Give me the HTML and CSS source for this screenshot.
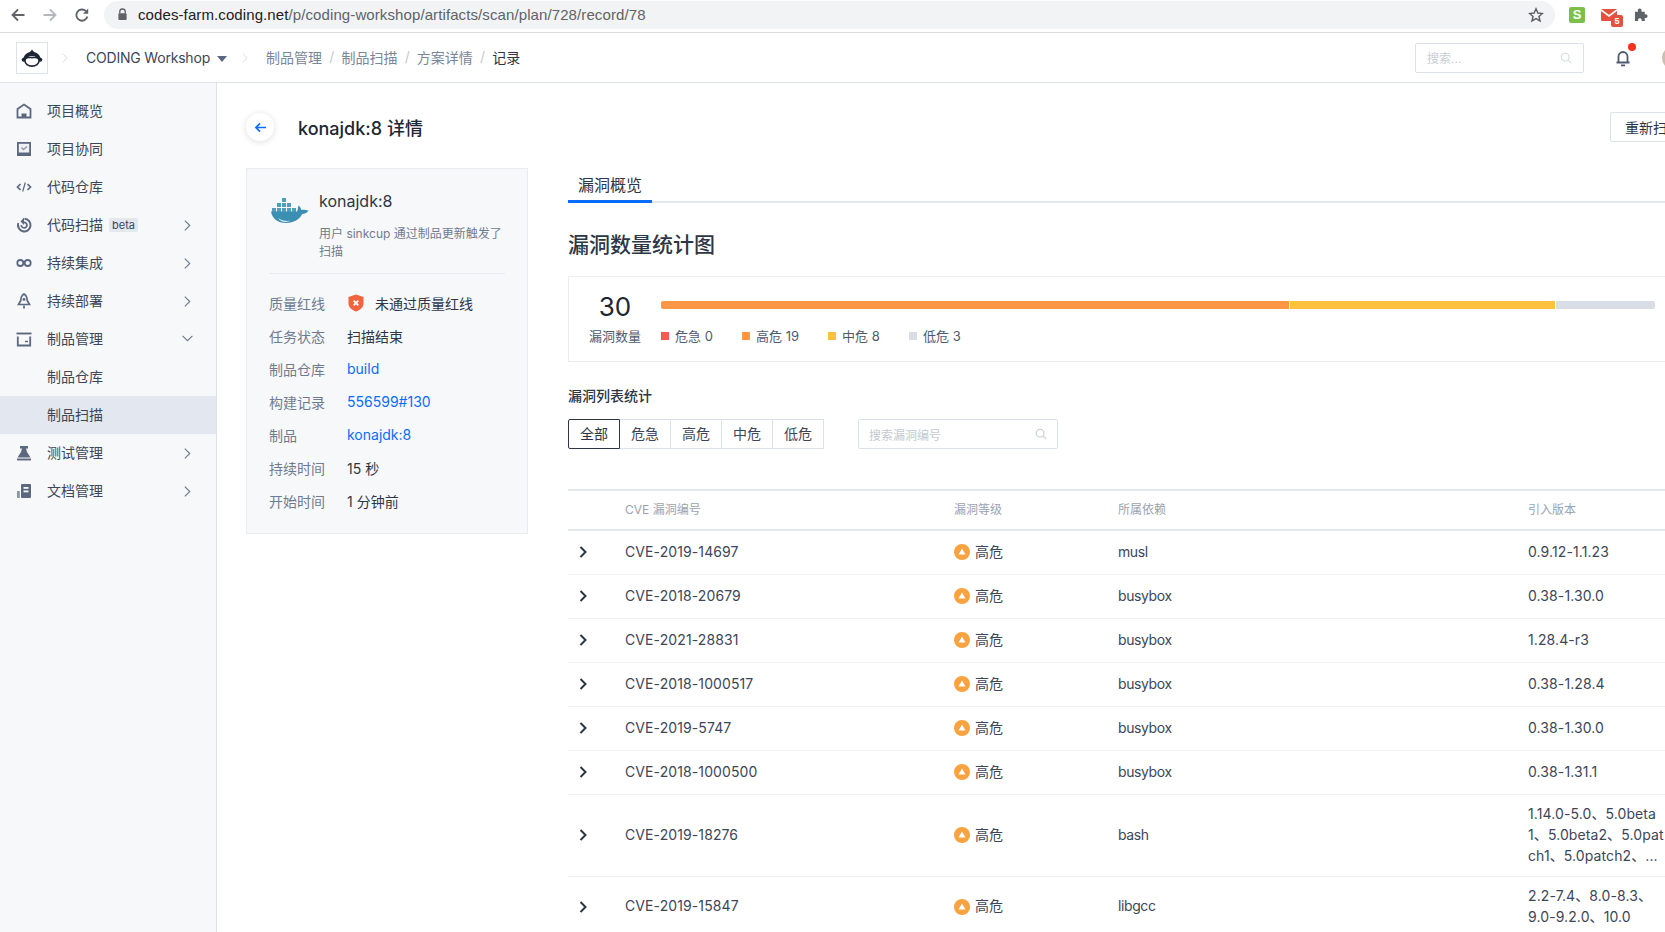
FILE: index.html
```html
<!DOCTYPE html>
<html lang="zh-CN">
<head>
    <meta charset="UTF-8">
    <title>konajdk:8 详情</title>
    <link rel="stylesheet" href="styles.css">
</head>
<body>

    <!-- Browser toolbar -->
    <div class="chrome">
        <svg class="chrome-btn" viewBox="0 0 16 16"><path d="M14.500 8H2.500M8 2.500 2.500 8 8 13.500" fill="none" stroke="#5f6368" stroke-width="1.800"/></svg>
        <svg class="chrome-btn" viewBox="0 0 16 16"><path d="M1.500 8h12M8 2.500 13.500 8 8 13.500" fill="none" stroke="#b4b7bb" stroke-width="1.800"/></svg>
        <svg class="chrome-btn" viewBox="0 0 16 16"><path d="M13.400 9.500A5.600 5.600 0 1 1 12 4.200" fill="none" stroke="#5f6368" stroke-width="1.800"/><path d="M14.200 1.600v5.200H9z" fill="#5f6368"/></svg>
        <div class="omnibox">
            <svg class="lock" viewBox="0 0 12 14"><path d="M3 6V4a3 3 0 0 1 6 0v2" fill="none" stroke="#5f6368" stroke-width="1.400"/><rect x="1.500" y="5.500" width="9" height="7.500" rx="1" fill="#5f6368"/></svg>
            <span class="url"><b>codes-farm.coding.net</b>/p/coding-workshop/artifacts/scan/plan/728/record/78</span>
            <svg class="star" viewBox="0 0 16 16"><path d="M8 1.800 9.900 6l4.500.5-3.400 3 1 4.500L8 11.700 4 14l1-4.500-3.400-3L6.100 6z" fill="none" stroke="#5f6368" stroke-width="1.500"/></svg>
        </div>
        <div class="ext-s">S</div>
        <div class="ext-mail">
            <svg viewBox="0 0 16 12"><rect width="16" height="12" rx="1" fill="#e25241"/><path d="M0 1 8 7l8-6" fill="none" stroke="#fff" stroke-width="1.600"/></svg>
            <span class="ext-badge">5</span>
        </div>
        <svg class="ext-puzzle" viewBox="0 0 16 16"><path d="M1 5h3.500a2 2 0 1 1 3.500-1.500V5h3.500v3a2 2 0 1 1 0 3.500V15H8a2 2 0 1 0-3.500 0H1z" fill="#5f6368"/></svg>
        <div class="ext-last"></div>
    </div>

    <!-- App header -->
    <header class="topbar">
        <div class="logo">
            <svg viewBox="0 0 24 20"><path d="M12 .5 14.500 4h-5z" fill="#1e2633"/><circle cx="2.800" cy="12" r="2.300" fill="#1e2633"/><circle cx="21.200" cy="12" r="2.300" fill="#1e2633"/><path d="M2.500 10C4 5.500 7.500 3 12 3s8 2.500 9.500 7z" fill="#1e2633"/><ellipse cx="12" cy="13" rx="7.800" ry="6" fill="#fff" stroke="#1e2633" stroke-width="1.800"/><path d="M5 11.500c3-2 4.500-1 7-1s4-1 7 1v-3H5z" fill="#1e2633"/></svg>
        </div>
        <svg class="sep first-sep" viewBox="0 0 8 14"><path d="m1 1 6 6-6 6" fill="none" stroke="#c9ced6" stroke-width="1"/></svg>
        <span class="project">CODING Workshop</span>
        <span class="caret"></span>
        <svg class="sep" viewBox="0 0 8 14"><path d="m1 1 6 6-6 6" fill="none" stroke="#c9ced6" stroke-width="1"/></svg>
        <nav class="crumbs">
            <span>制品管理</span><i>/</i><span>制品扫描</span><i>/</i><span>方案详情</span><i>/</i><span class="current">记录</span>
        </nav>
        <div class="top-search">
            <span>搜索...</span>
            <svg class="search-icon" viewBox="0 0 14 14"><circle cx="6" cy="6" r="4.500" fill="none" stroke="#d3d7de" stroke-width="1.200"/><path d="m9.500 9.500 3.500 3.500" stroke="#d3d7de" stroke-width="1.200"/></svg>
        </div>
        <div class="bell">
            <svg viewBox="0 0 16 18"><path d="M1.500 13.500h13M3.500 13V7.500a4.500 4.500 0 0 1 9 0V13" fill="none" stroke="#4e5a70" stroke-width="1.800"/><path d="M6 15.500h4v1.800H6z" fill="#4e5a70"/></svg>
            <span class="bell-dot"></span>
        </div>
        <div class="avatar"></div>
    </header>

    <div class="layout">
        <aside class="sidebar">
            <div class="nav-item">
                <svg class="nav-icon" viewBox="0 0 16 16"><path d="M1.500 14.500V6L8 1.500 14.500 6v8.500z" fill="none" stroke="#5c6880" stroke-width="1.800"/><rect x="5.500" y="10.500" width="5" height="4" fill="#5c6880"/></svg>
                <span>项目概览</span>
            </div>
            <div class="nav-item">
                <svg class="nav-icon" viewBox="0 0 16 16"><rect x="1" y="1" width="14" height="14" fill="#5c6880"/><rect x="2.800" y="2.800" width="10.400" height="8.700" fill="#eef0f4"/><path d="m5.500 6.500 2 2 3.500-3" fill="none" stroke="#8d97a8" stroke-width="1.300"/></svg>
                <span>项目协同</span>
            </div>
            <div class="nav-item">
                <svg class="nav-icon" viewBox="0 0 16 16"><path d="M4.500 5 1.500 8l3 3M11.500 5l3 3-3 3" fill="none" stroke="#5c6880" stroke-width="1.700"/><path d="m9.300 3.500-2.600 9" stroke="#5c6880" stroke-width="1.200"/></svg>
                <span>代码仓库</span>
            </div>
            <div class="nav-item">
                <svg class="nav-icon" viewBox="0 0 16 16"><path d="M8.500 1.800A6.300 6.300 0 1 1 2.300 6" fill="none" stroke="#5c6880" stroke-width="2"/><path d="M8 5.300A2.800 2.800 0 1 1 5.300 8" fill="none" stroke="#5c6880" stroke-width="1.700"/><path d="M8 .5v7.500l-3.500-3.500z" fill="#5c6880"/></svg>
                <span>代码扫描</span>
                <span class="beta">beta</span>
                <svg class="nav-arrow" viewBox="0 0 10 14"><path d="m2 1.500 5.500 5.500L2 12.500" fill="none" stroke="#6f7b90" stroke-width="1.300"/></svg>
            </div>
            <div class="nav-item">
                <svg class="nav-icon" viewBox="0 0 16 16"><circle cx="4.300" cy="8" r="3" fill="none" stroke="#5c6880" stroke-width="1.800"/><circle cx="11.700" cy="8" r="3" fill="none" stroke="#5c6880" stroke-width="1.800"/></svg>
                <span>持续集成</span>
                <svg class="nav-arrow" viewBox="0 0 10 14"><path d="m2 1.500 5.500 5.500L2 12.500" fill="none" stroke="#6f7b90" stroke-width="1.300"/></svg>
            </div>
            <div class="nav-item">
                <svg class="nav-icon" viewBox="0 0 16 16"><path d="M8 1c-2.500 1.500-3.200 4-3.200 6.500L2.500 11.500h11l-2.300-4C11.200 5 10.500 2.500 8 1z" fill="none" stroke="#5c6880" stroke-width="1.700"/><circle cx="8" cy="6.500" r="1.400" fill="#5c6880"/><path d="M8 12.500V15.500" stroke="#5c6880" stroke-width="1.700"/></svg>
                <span>持续部署</span>
                <svg class="nav-arrow" viewBox="0 0 10 14"><path d="m2 1.500 5.500 5.500L2 12.500" fill="none" stroke="#6f7b90" stroke-width="1.300"/></svg>
            </div>
            <div class="nav-item">
                <svg class="nav-icon" viewBox="0 0 16 16"><path d="M.5 2.500h15" stroke="#5c6880" stroke-width="1.900"/><path d="M1.800 5.500v9h12.400v-9" fill="none" stroke="#5c6880" stroke-width="1.800"/><path d="M9 10.500h3" stroke="#5c6880" stroke-width="1.500"/></svg>
                <span>制品管理</span>
                <svg class="nav-arrow down" viewBox="0 0 14 10"><path d="m1.500 2 5.500 5.500L12.500 2" fill="none" stroke="#6f7b90" stroke-width="1.300"/></svg>
            </div>
            <div class="nav-item sub">
                <span>制品仓库</span>
            </div>
            <div class="nav-item sub active">
                <span>制品扫描</span>
            </div>
            <div class="nav-item">
                <svg class="nav-icon" viewBox="0 0 16 16"><path d="M4 1h8v2.500H10L11 7H5l1-3.500H4z" fill="#5c6880"/><path d="M5 7h6l3.500 5.500H1.500z" fill="#5c6880"/><path d="M1 14.500h14" stroke="#5c6880" stroke-width="1.900"/></svg>
                <span>测试管理</span>
                <svg class="nav-arrow" viewBox="0 0 10 14"><path d="m2 1.500 5.500 5.500L2 12.500" fill="none" stroke="#6f7b90" stroke-width="1.300"/></svg>
            </div>
            <div class="nav-item">
                <svg class="nav-icon" viewBox="0 0 16 16"><rect x="5" y="1" width="10" height="14" rx="1" fill="#5c6880"/><rect x="7.500" y="4" width="5" height="1.800" fill="#f7f8fa"/><rect x="7.500" y="7.500" width="5" height="1.800" fill="#f7f8fa"/><rect x="1" y="8" width="2.800" height="7" fill="#8d97a8"/></svg>
                <span>文档管理</span>
                <svg class="nav-arrow" viewBox="0 0 10 14"><path d="m2 1.500 5.500 5.500L2 12.500" fill="none" stroke="#6f7b90" stroke-width="1.300"/></svg>
            </div>
        </aside>

        <main class="main">
            <div class="page-head">
                <div class="back">
                    <svg viewBox="0 0 14 12"><path d="M13 6H2M6.500 1.500 2 6l4.500 4.500" fill="none" stroke="#0a6cff" stroke-width="1.800"/></svg>
                </div>
                <h1>konajdk:8 详情</h1>
                <button class="rescan">重新扫描</button>
            </div>

            <div class="columns">
                <section class="card">
                    <div class="card-top">
                        <svg class="whale" viewBox="0 0 38 26">
                            <g fill="#4f9fbc"><rect x="11" y="0" width="4" height="4"/><rect x="11" y="5" width="4" height="4"/><rect x="16" y="5" width="4" height="4"/><rect x="6" y="5" width="4" height="4"/><rect x="1" y="10" width="4" height="4"/><rect x="6" y="10" width="4" height="4"/><rect x="11" y="10" width="4" height="4"/><rect x="16" y="10" width="4" height="4"/><rect x="21" y="10" width="4" height="4"/></g>
                            <path d="M0 13.500h26c1.200-1.500.6-4 1.500-6 1.600 1 2.500 3 2.800 4.600 2-.5 5-.3 7.200.7-1.500 2.300-4.300 3-6.300 3.200C28.500 21.500 23 25 15 25 7 25 1 20.500 0 13.500z" fill="#3a8fb3"/>
                            <path d="M7 20c3 2.500 8 3.300 12 2.800-2.800 1.800-9.500 1.700-12-2.800z" fill="#e3eef3"/>
                        </svg>
                        <div class="card-title">
                            <h2>konajdk:8</h2>
                            <p>用户 sinkcup 通过制品更新触发了扫描</p>
                        </div>
                    </div>
                    <dl class="info">
                        <div class="info-row"><dt>质量红线</dt><dd class="gate">
                            <svg class="shield" viewBox="0 0 16 18"><path d="M8 .5 15.500 3v6.500c0 4-3.500 6.500-7.500 8-4-1.500-7.500-4-7.500-8V3z" fill="#f2643d"/><path d="m5.700 6.700 4.600 4.600m0-4.600-4.600 4.600" stroke="#fff" stroke-width="1.800"/></svg>未通过质量红线</dd></div>
                        <div class="info-row"><dt>任务状态</dt><dd>扫描结束</dd></div>
                        <div class="info-row"><dt>制品仓库</dt><dd><a>build</a></dd></div>
                        <div class="info-row"><dt>构建记录</dt><dd><a>556599#130</a></dd></div>
                        <div class="info-row"><dt>制品</dt><dd><a>konajdk:8</a></dd></div>
                        <div class="info-row"><dt>持续时间</dt><dd>15 秒</dd></div>
                        <div class="info-row"><dt>开始时间</dt><dd>1 分钟前</dd></div>
                    </dl>
                </section>

                <section class="detail">
                    <div class="tabs"><span class="tab">漏洞概览</span></div>
                    <h3 class="chart-title">漏洞数量统计图</h3>

                    <div class="stats">
                        <div class="total">
                            <strong>30</strong>
                            <span>漏洞数量</span>
                        </div>
                        <div class="stats-right">
                            <div class="bar">
                                <span class="seg high"></span>
                                <span class="seg mid"></span>
                                <span class="seg low"></span>
                            </div>
                            <div class="legend">
                                <span class="legend-item w-crit"><i class="sq crit"></i>危急 0</span>
                                <span class="legend-item w-high"><i class="sq orange"></i>高危 19</span>
                                <span class="legend-item w-mid"><i class="sq yellow"></i>中危 8</span>
                                <span class="legend-item"><i class="sq grey"></i>低危 3</span>
                            </div>
                        </div>
                    </div>

                    <h4 class="list-title">漏洞列表统计</h4>
                    <div class="filters">
                        <div class="btn-group">
                            <span class="on">全部</span><span>危急</span><span>高危</span><span>中危</span><span>低危</span>
                        </div>
                        <div class="cve-search">
                            <span>搜索漏洞编号</span>
                            <svg class="search-icon" viewBox="0 0 14 14"><circle cx="6" cy="6" r="4.500" fill="none" stroke="#c9ced7" stroke-width="1.400"/><path d="m9.500 9.500 3.500 3.500" stroke="#c9ced7" stroke-width="1.400"/></svg>
                        </div>
                    </div>

                    <table class="cve-table">
                        <colgroup><col class="c-exp"><col class="c-cve"><col class="c-lvl"><col class="c-dep"><col class="c-ver"></colgroup>
                        <thead>
                            <tr><th></th><th>CVE 漏洞编号</th><th>漏洞等级</th><th>所属依赖</th><th>引入版本</th></tr>
                        </thead>
                        <tbody>
                            <tr><td class="exp"><svg viewBox="0 0 8 12"><path d="m1.500 1 5 5-5 5" fill="none" stroke="#2c3646" stroke-width="2"/></svg></td><td>CVE-2019-14697</td><td><span class="lvl"><svg viewBox="0 0 16 16"><circle cx="8" cy="8" r="8" fill="#f8a33f"/><path d="M8 4.500 11.500 10.500h-7z" fill="#fff"/></svg>高危</span></td><td class="dep">musl</td><td>0.9.12-1.1.23</td></tr>
                            <tr><td class="exp"><svg viewBox="0 0 8 12"><path d="m1.500 1 5 5-5 5" fill="none" stroke="#2c3646" stroke-width="2"/></svg></td><td>CVE-2018-20679</td><td><span class="lvl"><svg viewBox="0 0 16 16"><circle cx="8" cy="8" r="8" fill="#f8a33f"/><path d="M8 4.500 11.500 10.500h-7z" fill="#fff"/></svg>高危</span></td><td class="dep">busybox</td><td>0.38-1.30.0</td></tr>
                            <tr><td class="exp"><svg viewBox="0 0 8 12"><path d="m1.500 1 5 5-5 5" fill="none" stroke="#2c3646" stroke-width="2"/></svg></td><td>CVE-2021-28831</td><td><span class="lvl"><svg viewBox="0 0 16 16"><circle cx="8" cy="8" r="8" fill="#f8a33f"/><path d="M8 4.500 11.500 10.500h-7z" fill="#fff"/></svg>高危</span></td><td class="dep">busybox</td><td>1.28.4-r3</td></tr>
                            <tr><td class="exp"><svg viewBox="0 0 8 12"><path d="m1.500 1 5 5-5 5" fill="none" stroke="#2c3646" stroke-width="2"/></svg></td><td>CVE-2018-1000517</td><td><span class="lvl"><svg viewBox="0 0 16 16"><circle cx="8" cy="8" r="8" fill="#f8a33f"/><path d="M8 4.500 11.500 10.500h-7z" fill="#fff"/></svg>高危</span></td><td class="dep">busybox</td><td>0.38-1.28.4</td></tr>
                            <tr><td class="exp"><svg viewBox="0 0 8 12"><path d="m1.500 1 5 5-5 5" fill="none" stroke="#2c3646" stroke-width="2"/></svg></td><td>CVE-2019-5747</td><td><span class="lvl"><svg viewBox="0 0 16 16"><circle cx="8" cy="8" r="8" fill="#f8a33f"/><path d="M8 4.500 11.500 10.500h-7z" fill="#fff"/></svg>高危</span></td><td class="dep">busybox</td><td>0.38-1.30.0</td></tr>
                            <tr><td class="exp"><svg viewBox="0 0 8 12"><path d="m1.500 1 5 5-5 5" fill="none" stroke="#2c3646" stroke-width="2"/></svg></td><td>CVE-2018-1000500</td><td><span class="lvl"><svg viewBox="0 0 16 16"><circle cx="8" cy="8" r="8" fill="#f8a33f"/><path d="M8 4.500 11.500 10.500h-7z" fill="#fff"/></svg>高危</span></td><td class="dep">busybox</td><td>0.38-1.31.1</td></tr>
                            <tr><td class="exp"><svg viewBox="0 0 8 12"><path d="m1.500 1 5 5-5 5" fill="none" stroke="#2c3646" stroke-width="2"/></svg></td><td>CVE-2019-18276</td><td><span class="lvl"><svg viewBox="0 0 16 16"><circle cx="8" cy="8" r="8" fill="#f8a33f"/><path d="M8 4.500 11.500 10.500h-7z" fill="#fff"/></svg>高危</span></td><td class="dep">bash</td><td class="ver">1.14.0-5.0、5.0beta1、5.0beta2、5.0patch1、5.0patch2、...</td></tr>
                            <tr><td class="exp"><svg viewBox="0 0 8 12"><path d="m1.500 1 5 5-5 5" fill="none" stroke="#2c3646" stroke-width="2"/></svg></td><td>CVE-2019-15847</td><td><span class="lvl"><svg viewBox="0 0 16 16"><circle cx="8" cy="8" r="8" fill="#f8a33f"/><path d="M8 4.500 11.500 10.500h-7z" fill="#fff"/></svg>高危</span></td><td class="dep">libgcc</td><td>2.2-7.4、8.0-8.3、9.0-9.2.0、10.0</td></tr>
                        </tbody>
                    </table>
                </section>
            </div>
        </main>
    </div>

</body>
</html>
```

FILE: styles.css
```css
* {
    box-sizing: border-box;
}

html, body {
    margin: 0;
    padding: 0;
    width: 1665px;
    height: 932px;
    overflow: hidden;
}

body {
    font-family: Inter, "Noto Sans CJK SC", sans-serif;
    font-size: 14px;
    color: #2c3646;
    background-color: #fff;
}

/* Browser toolbar */
.chrome {
    display: flex;
    align-items: center;
    height: 33px;
    padding: 0 0 3px 10px;
    border-bottom: 1px solid #dadce0;
    overflow: hidden;
}

.chrome-btn {
    flex: none;
    width: 16px;
    height: 16px;
    margin-right: 16px;
}

.chrome-btn:nth-child(3) {
    margin-right: 14px;
}

.omnibox {
    display: flex;
    align-items: center;
    flex: none;
    width: 1451px;
    height: 28px;
    padding: 0 10px 0 13px;
    background-color: #f1f3f4;
    border-radius: 14px;
}

.lock {
    width: 11px;
    height: 13px;
    margin-right: 10px;
}

.url {
    flex: 1;
    font-family: "Liberation Sans", sans-serif;
    font-size: 15px;
    color: #5f6368;
    letter-spacing: 0.1px;
}

.url b {
    font-weight: normal;
    color: #202124;
}

.star {
    width: 16px;
    height: 16px;
    margin-right: 1px;
}

.ext-s {
    flex: none;
    width: 16px;
    height: 16px;
    margin-left: 14px;
    background-color: #7cbf4b;
    border-radius: 2px;
    color: #fff;
    font: bold 13px/16px "Liberation Sans", sans-serif;
    text-align: center;
}

.ext-mail {
    position: relative;
    flex: none;
    width: 16px;
    height: 12px;
    margin-left: 16px;
}

.ext-mail svg {
    display: block;
    width: 16px;
    height: 12px;
}

.ext-badge {
    position: absolute;
    left: 10px;
    top: 6px;
    width: 12px;
    height: 12px;
    background-color: #e25241;
    border-radius: 2px;
    color: #fff;
    font: bold 9px/12px "Liberation Sans", sans-serif;
    text-align: center;
}

.ext-puzzle {
    flex: none;
    width: 15px;
    height: 15px;
    margin-left: 17px;
}

.ext-last {
    flex: none;
    width: 8px;
    height: 14px;
    margin-left: 16px;
    background-color: #5f6368;
    border-radius: 4px;
}

/* App header */
.topbar {
    display: flex;
    align-items: center;
    height: 50px;
    padding-left: 16px;
    border-bottom: 1px solid #dde1e8;
    overflow: hidden;
}

.logo {
    display: flex;
    align-items: center;
    justify-content: center;
    flex: none;
    width: 32px;
    height: 32px;
    border: 1px solid #dde1e8;
}

.logo svg {
    width: 22px;
    height: 18px;
}

.sep {
    flex: none;
    width: 6px;
    height: 10px;
    margin: 0 17px 0 15px;
}

.first-sep {
    margin-left: 14px;
    margin-right: 18px;
}

.project {
    color: #3c4658;
    letter-spacing: -0.2px;
}

.caret {
    width: 0;
    height: 0;
    margin-left: 7px;
    margin-top: 2px;
    border-left: 5px solid transparent;
    border-right: 5px solid transparent;
    border-top: 6px solid #5c6880;
}

.crumbs {
    display: flex;
    align-items: center;
    padding-bottom: 2px;
    margin-left: 1px;
    color: #7a8699;
}

.crumbs i {
    margin: 0 7.2px;
    font-style: normal;
    color: #c5cad3;
}

.crumbs .current {
    color: #2c3646;
}

.top-search {
    display: flex;
    align-items: center;
    justify-content: space-between;
    width: 169px;
    height: 30px;
    margin-left: auto;
    padding: 0 11px;
    border: 1px solid #dde1e8;
    border-radius: 2px;
    font-size: 12px;
    color: #c9cdd4;
}

.search-icon {
    width: 12px;
    height: 12px;
}

.bell {
    position: relative;
    flex: none;
    width: 16px;
    height: 18px;
    margin-left: 31px;
}

.bell svg {
    display: block;
    width: 16px;
    height: 18px;
}

.bell-dot {
    position: absolute;
    left: 13px;
    top: -6px;
    width: 8px;
    height: 8px;
    background-color: #f5321e;
    border-radius: 50%;
}

.avatar {
    flex: none;
    width: 24px;
    height: 24px;
    margin-left: 31px;
    margin-right: -21px;
    background-color: #cdbfb0;
    border-radius: 50%;
}

/* Page */
.layout {
    display: flex;
    height: 849px;
}

.sidebar {
    flex: none;
    width: 217px;
    padding-top: 9px;
    background-color: #f7f8fa;
    border-right: 1px solid #dde1e8;
}

.nav-item {
    display: flex;
    align-items: center;
    height: 38px;
    padding: 0 24px 2px 16px;
    color: #3c4658;
}

.nav-item.sub {
    padding-left: 47px;
}

.nav-item.active {
    background-color: #e3e7ef;
}

.nav-icon {
    flex: none;
    width: 16px;
    height: 16px;
    margin-top: 1px;
    margin-right: 15px;
}

.beta {
    margin-top: 2px;
    margin-left: 6px;
    padding: 0 3px;
    background-color: #e3e7ef;
    border-radius: 2px;
    font-size: 11px;
    line-height: 14px;
}

.nav-arrow {
    width: 9px;
    height: 13px;
    margin-top: 2px;
    margin-left: auto;
}

.nav-arrow.down {
    width: 13px;
    height: 9px;
    margin-top: 0;
    margin-right: -2px;
}

.main {
    flex: 1;
    min-width: 0;
    padding: 0 0 0 29px;
    overflow: hidden;
}

.page-head {
    display: flex;
    align-items: center;
    width: 1500px;
    height: 30px;
    margin-top: 29px;
}

.back {
    display: flex;
    align-items: center;
    justify-content: center;
    flex: none;
    width: 28px;
    height: 28px;
    background-color: #fff;
    border-radius: 50%;
    box-shadow: 0px 1px 6px rgba(0, 0, 0, 0.14);
}

.back svg {
    width: 13px;
    height: 11px;
}

.page-head h1 {
    margin: 0 0 0 24px;
    font-size: 18px;
    font-weight: 500;
    color: #1e2633;
}

.rescan {
    width: 100px;
    height: 30px;
    margin-left: 1187px;
    padding: 0 0 0 14px;
    background-color: #fff;
    border: 1px solid #dde1e8;
    border-radius: 2px;
    font: inherit;
    color: #2c3646;
    text-align: left;
}

.columns {
    display: flex;
    align-items: flex-start;
    width: 1500px;
    margin-top: 26px;
}

/* Left card */
.card {
    flex: none;
    width: 282px;
    height: 366px;
    padding: 22px 22px 0;
    background-color: #f7f8fa;
    border: 1px solid #e8ebf0;
}

.card-top {
    display: flex;
    height: 83px;
    border-bottom: 1px solid #e8ebf0;
}

.whale {
    flex: none;
    width: 38px;
    height: 26px;
    margin: 7px 10px 0 2px;
}

.card-title h2 {
    margin: 0;
    font-size: 16px;
    font-weight: 400;
    line-height: 20px;
    color: #2c3646;
}

.card-title p {
    margin: 14px 0 0;
    font-size: 12px;
    line-height: 18px;
    color: #6f7b90;
}

.info {
    margin: 12px 0 0;
}

.info-row {
    display: flex;
    align-items: center;
    height: 33px;
}

.info dt {
    flex: none;
    width: 78px;
    color: #6f7b90;
}

.info dd {
    display: flex;
    align-items: center;
    margin: 0;
}

.info a {
    color: #0a6cff;
}

.shield {
    width: 16px;
    height: 18px;
    margin-left: 1px;
    margin-right: 11px;
}

/* Right side */
.detail {
    flex: none;
    width: 1150px;
    margin-left: 40px;
}

.tabs {
    height: 35px;
    border-bottom: 2px solid #e3e6ec;
}

.tab {
    display: inline-block;
    height: 35px;
    padding: 0 10px;
    border-bottom: 3px solid #0a6cff;
    font-size: 16px;
    line-height: 34px;
    color: #2c3646;
}

.chart-title {
    margin: 27px 0 0;
    font-size: 21px;
    font-weight: 500;
    line-height: 29px;
    color: #2c3646;
}

.stats {
    display: flex;
    height: 86px;
    margin-top: 17px;
    border: 1px solid #ebedf1;
}

.total {
    display: flex;
    flex-direction: column;
    align-items: center;
    flex: none;
    width: 92px;
    padding-top: 14px;
}

.total strong {
    font-size: 26px;
    font-weight: 400;
    line-height: 32px;
    color: #1e2633;
}

.total span {
    margin-top: 3px;
    font-size: 13px;
    line-height: 20px;
    color: #4e5a70;
}

.stats-right {
    flex: none;
    width: 994px;
}

.bar {
    display: flex;
    gap: 1px;
    height: 8px;
    margin-top: 24px;
    border-radius: 2px;
    overflow: hidden;
}

.seg.high {
    width: 628px;
    background-color: #fd9645;
}

.seg.mid {
    width: 265px;
    background-color: #fec13e;
}

.seg.low {
    width: 99px;
    background-color: #d9dde5;
}

.legend {
    display: flex;
    margin-top: 17px;
    font-size: 13px;
    line-height: 20px;
    color: #4e5a70;
}

.legend-item {
    display: flex;
    align-items: center;
}

.w-crit {
    width: 81px;
}

.w-high {
    width: 86px;
}

.w-mid {
    width: 81px;
}

.sq {
    width: 8px;
    height: 8px;
    margin-right: 6px;
}

.sq.crit {
    background-color: #f85a50;
}

.sq.orange {
    background-color: #fd9645;
}

.sq.yellow {
    background-color: #fec13e;
}

.sq.grey {
    background-color: #d9dde5;
}

.list-title {
    margin: 24px 0 0;
    font-size: 14px;
    font-weight: 500;
    line-height: 20px;
    color: #2c3646;
}

.filters {
    display: flex;
    margin-top: 13px;
}

.btn-group {
    display: flex;
    height: 30px;
}

.btn-group span {
    display: block;
    width: 51px;
    border: 1px solid #dde1e8;
    border-left: none;
    line-height: 28px;
    text-align: center;
    color: #3c4658;
}

.btn-group span.on {
    width: 52px;
    border: 1px solid #2c3646;
    border-radius: 2px 0 0 2px;
    color: #2c3646;
}

.cve-search {
    display: flex;
    align-items: center;
    justify-content: space-between;
    width: 200px;
    height: 30px;
    margin-left: 34px;
    padding: 0 10px;
    border: 1px solid #dde1e8;
    border-radius: 2px;
    font-size: 12px;
    color: #c4c9d1;
}

/* Table */
.cve-table {
    width: 1090px;
    margin-top: 40px;
    border-collapse: collapse;
    table-layout: fixed;
}

.c-exp {
    width: 57px;
}

.c-cve {
    width: 329px;
}

.c-lvl {
    width: 164px;
}

.c-dep {
    width: 410px;
}

.c-ver {
    width: 137px;
}

.cve-table th {
    height: 40px;
    padding: 0 0 3px;
    border-top: 2px solid #e3e6ec;
    border-bottom: 2px solid #e3e6ec;
    font-size: 12px;
    font-weight: 400;
    text-align: left;
    color: #9aa3b2;
}

.cve-table td {
    height: 44px;
    padding: 8px 0 10px;
    border-bottom: 1px solid #f0f1f4;
    line-height: 21px;
    color: #3c4658;
    letter-spacing: 0.1px;
}

.cve-table td.dep {
    letter-spacing: -0.4px;
}

td.exp {
    padding-left: 11px;
}

td.exp svg {
    display: block;
    width: 8px;
    height: 12px;
    margin-top: 2px;
}

td.ver {
    word-break: break-all;
}

.lvl {
    display: flex;
    align-items: center;
}

.lvl svg {
    width: 16px;
    height: 16px;
    margin-top: 2px;
    margin-right: 5px;
}
```
